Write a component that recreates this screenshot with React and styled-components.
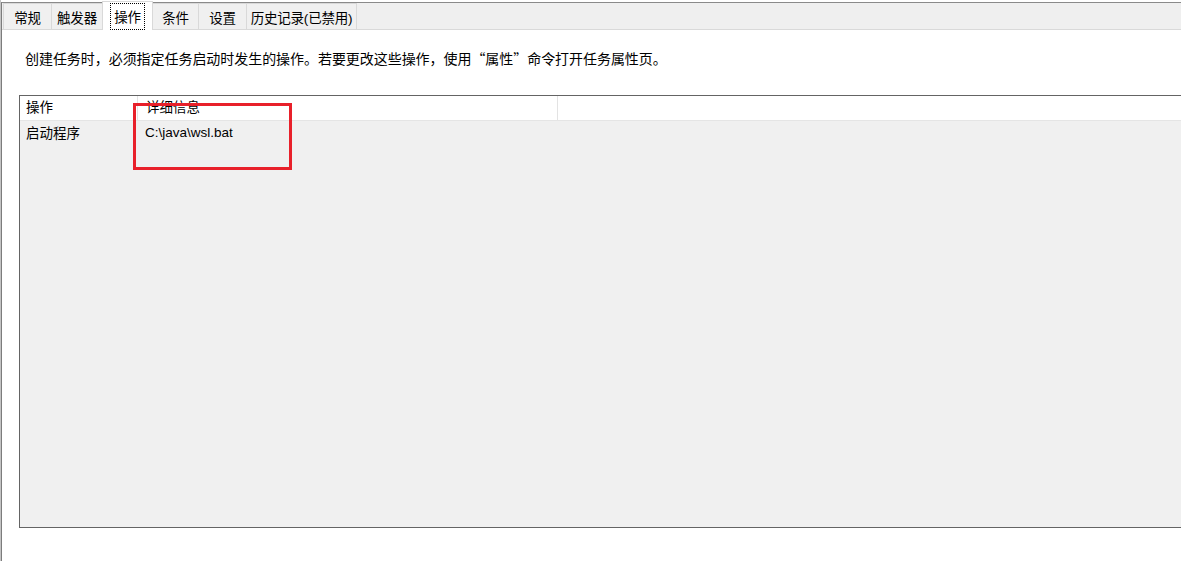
import React from 'react';
import styled, { createGlobalStyle } from 'styled-components';

const GlobalStyle = createGlobalStyle`
  html, body {
    margin: 0;
    padding: 0;
    background: #fff;
  }
  body {
    font-family: "Liberation Sans", "Noto Sans CJK SC", sans-serif;
    font-size: 13.5px;
    color: #000;
  }
`;

const tabs = [
  { label: '常规', width: 49 },
  { label: '触发器', width: 52 },
  { label: '操作', width: 51, active: true },
  { label: '条件', width: 47 },
  { label: '设置', width: 49 },
  { label: '历史记录(已禁用)', width: 111 },
];

const Window = styled.div`
  height: 561px;
  overflow: hidden;
  box-sizing: border-box;
  padding-top: 2px;
  border-left: 1px solid #c4c4c4;
`;

const Frame = styled.div`
  height: 100%;
  box-sizing: border-box;
  border-top: 1px solid #8a8a8a;
  border-left: 1px solid #7c7c7c;
  display: flex;
  flex-direction: column;
`;

const TabStrip = styled.div`
  height: 27px;
  flex: none;
  box-sizing: border-box;
  background: #efefef;
  border-bottom: 1px solid #d9d9d9;
  display: flex;
  align-items: flex-end;
  padding-left: 1px;
`;

const Tab = styled.div`
  position: relative;
  width: ${({ $w }) => $w}px;
  flex: none;
  height: ${({ $active }) => ($active ? '29px' : '26px')};
  margin-bottom: ${({ $active }) => ($active ? '-1px' : '0')};
  box-sizing: border-box;
  display: flex;
  align-items: center;
  justify-content: center;
  padding-top: ${({ $active }) => ($active ? '0' : '1px')};
  background: ${({ $active }) => ($active ? '#fff' : '#f0f0f0')};
  border: 1px solid #d9d9d9;
  border-bottom: 0;
  margin-left: ${({ $first }) => ($first ? '0' : '-1px')};
  z-index: ${({ $active }) => ($active ? 2 : 1)};
  white-space: nowrap;
  font-size: 13.5px;
  letter-spacing: -0.2px;
`;

const FocusRing = styled.span`
  padding: 2px 3px 3px;
  border: 1px dotted #000;
`;

const Body = styled.div`
  flex: 1;
  background: #fff;
  padding: 18px 0 0 17px;
  display: flex;
  flex-direction: column;
`;

const Description = styled.p`
  margin: 0 0 27px 6px;
  line-height: 20px;
  white-space: nowrap;
  font-family: "Noto Sans CJK SC", "Liberation Sans", sans-serif;
  font-size: 14px;
  letter-spacing: -0.05px;
`;

const ListBox = styled.div`
  position: relative;
  width: calc(100% + 20px);
  height: 433px;
  box-sizing: border-box;
  border: 1px solid #646464;
  background: #f0f0f0;
`;

const Row = styled.div`
  display: grid;
  grid-template-columns: 118px 420px 1fr;
  height: 24px;
  background: ${({ $header }) => ($header ? '#fff' : 'transparent')};
  border-bottom: ${({ $header }) => ($header ? '1px solid #e5e5e5' : 'none')};
`;

const Cell = styled.div`
  display: flex;
  align-items: center;
  padding-left: ${({ $pad }) => $pad}px;
  padding-bottom: ${({ $lift }) => $lift || 0}px;
  border-right: ${({ $divider }) => ($divider ? '1px solid #e3e3e3' : 'none')};
  white-space: nowrap;
  overflow: hidden;
`;

const Highlight = styled.div`
  position: absolute;
  left: 113px;
  top: 7px;
  width: 153px;
  height: 61px;
  border: 3px solid #e8202a;
  pointer-events: none;
`;

export default function App() {
  return (
    <>
      <GlobalStyle />
      <Window>
        <Frame>
          <TabStrip>
            {tabs.map((t, i) => (
              <Tab key={t.label} $w={t.width} $active={t.active} $first={i === 0}>
                {t.active ? <FocusRing>{t.label}</FocusRing> : t.label}
              </Tab>
            ))}
          </TabStrip>
          <Body>
            <Description>
              创建任务时，必须指定任务启动时发生的操作。若要更改这些操作，使用“属性”命令打开任务属性页。
            </Description>
            <ListBox>
              <Row $header>
                <Cell $pad={6} $lift={4} $divider>操作</Cell>
                <Cell $pad={8} $lift={4} $divider>详细信息</Cell>
                <Cell />
              </Row>
              <Row>
                <Cell $pad={6} $lift={2}>启动程序</Cell>
                <Cell $pad={7} $lift={2}>C:\java\wsl.bat</Cell>
                <Cell />
              </Row>
              <Highlight />
            </ListBox>
          </Body>
        </Frame>
      </Window>
    </>
  );
}
